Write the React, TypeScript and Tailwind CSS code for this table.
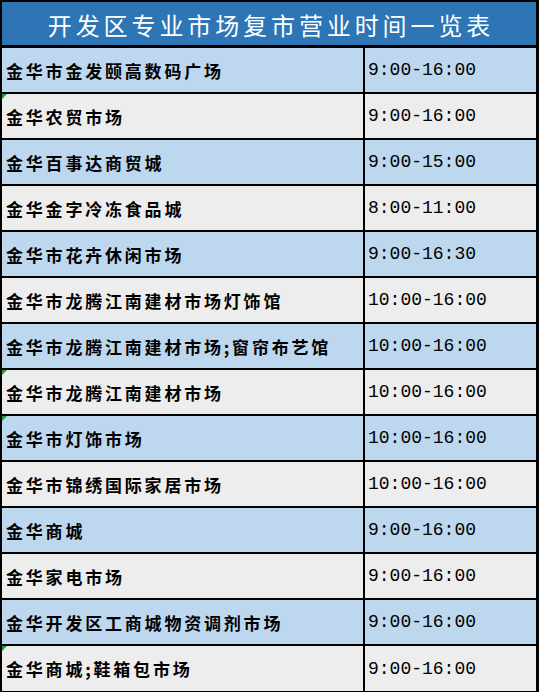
import React from 'react';

interface Row {
  name: string;
  time: string;
  flag?: boolean;
}

const rows: Row[] = [
  { name: '金华市金发颐高数码广场', time: '9:00-16:00' },
  { name: '金华农贸市场', time: '9:00-16:00', flag: true },
  { name: '金华百事达商贸城', time: '9:00-15:00' },
  { name: '金华金字冷冻食品城', time: '8:00-11:00' },
  { name: '金华市花卉休闲市场', time: '9:00-16:30' },
  { name: '金华市龙腾江南建材市场灯饰馆', time: '10:00-16:00' },
  { name: '金华市龙腾江南建材市场;窗帘布艺馆', time: '10:00-16:00' },
  { name: '金华市龙腾江南建材市场', time: '10:00-16:00', flag: true },
  { name: '金华市灯饰市场', time: '10:00-16:00', flag: true },
  { name: '金华市锦绣国际家居市场', time: '10:00-16:00' },
  { name: '金华商城', time: '9:00-16:00' },
  { name: '金华家电市场', time: '9:00-16:00' },
  { name: '金华开发区工商城物资调剂市场', time: '9:00-16:00' },
  { name: '金华商城;鞋箱包市场', time: '9:00-16:00', flag: true },
];

const cjk = { fontFamily: '"Noto Sans CJK SC", "Liberation Sans", sans-serif' };
const mono = { fontFamily: '"Liberation Mono", "Noto Sans CJK SC", monospace' };

export default function App() {
  return (
    <div className="w-[539px] h-[692px] bg-white">
      <div className="w-[539px] border-l-2 border-t-2 border-r-[3px] border-b-[3px] border-black flex flex-col">
        <div
          className="h-[41px] bg-[#2e75b6] border-b-[3px] border-black box-content flex items-center justify-center pt-[2px] pl-[4px] text-white text-[24px] tracking-[3.9px]"
          style={cjk}
        >
          开发区专业市场复市营业时间一览表
        </div>
        {rows.map((r, i) => {
          const bg = i % 2 === 0 ? 'bg-[#bdd7ee]' : 'bg-[#ededed]';
          const last = i === rows.length - 1;
          return (
            <div
              key={i}
              className={`flex ${last ? 'h-[45px]' : 'h-[46px] border-b-2 border-black'} ${bg}`}
            >
              <div
                className="relative w-[361px] flex items-center pl-[4px] pt-[1px] text-[17px] font-semibold tracking-[2.8px] text-black"
                style={cjk}
              >
                {r.flag && (
                  <span className="absolute left-0 top-0 w-0 h-0 border-t-[5px] border-r-[5px] border-t-[#1e9e3a] border-r-transparent" />
                )}
                {r.name}
              </div>
              <div
                className="flex-1 border-l-2 border-black flex items-center pl-[3px] pt-[1px] text-[18px] text-black"
                style={mono}
              >
                {r.time}
              </div>
            </div>
          );
        })}
      </div>
    </div>
  );
}
